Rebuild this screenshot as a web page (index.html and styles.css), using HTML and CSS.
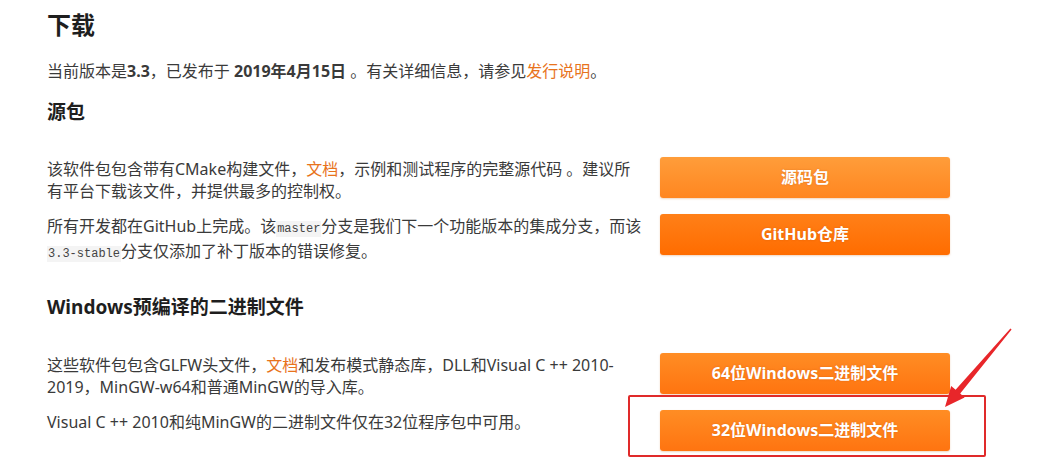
FILE: index.html
```html
<!DOCTYPE html>
<html lang="zh-CN">
<head>
  <meta charset="UTF-8" />
  <meta name="viewport" content="width=device-width, initial-scale=1.0"/>
  <title>下载 - GLFW</title>
  <link rel="stylesheet" href="styles.css">
</head>
<body>
  <div class="page">
    <h1>下载</h1>
    <p class="intro">当前版本是<b>3.3</b>，已发布于 <b>2019年4月15日</b> 。有关详细信息，请参见<a href="#">发行说明</a>。</p>

    <h2>源包</h2>
    <div class="row">
      <p>该软件包包含带有CMake构建文件，<a href="#">文档</a>，示例和测试程序的完整源代码 。建议所有平台下载该文件，并提供最多的控制权。</p>
      <a class="btn light" href="#">源码包</a>
    </div>
    <div class="row">
      <p>所有开发都在GitHub上完成。该<code>master</code>分支是我们下一个功能版本的集成分支，而该<code>3.3-stable</code>分支仅添加了补丁版本的错误修复。</p>
      <a class="btn dark" href="#">GitHub仓库</a>
    </div>

    <h2 class="win">Windows预编译的二进制文件</h2>
    <div class="row">
      <p>这些软件包包含GLFW头文件，<a href="#">文档</a>和发布模式静态库，DLL和Visual C ++ 2010-<wbr>2019，MinGW-w64和普通MinGW的导入库。</p>
      <a class="btn" href="#">64位Windows二进制文件</a>
    </div>
    <div class="row">
      <p>Visual C ++ 2010和纯MinGW的二进制文件仅在32位程序包中可用。</p>
      <a class="btn" href="#">32位Windows二进制文件</a>
    </div>

    <!-- screenshot markup -->
    <div class="mark-box"></div>
    <svg class="mark-arrow" width="80" height="90" viewBox="0 0 80 90">
      <polygon fill="#e8262a" points="70.4,3.5 15.6,64.8 11.2,61 5,82 24.6,72.4 20.2,68.6 71.6,4.5"/>
    </svg>
  </div>
</body>
</html>
```

FILE: styles.css
```css
body {
  margin: 0;
  background: #fff;
  color: #3a3a3a;
  font-family: "Noto Sans", "Noto Sans CJK SC", sans-serif;
  font-size: 16px;
}
.page {
  position: relative;
  padding: 9px 47px 0;
}
h1 {
  margin: 0;
  font-size: 24px;
  line-height: 32px;
  color: #1e1e1e;
}
h2 {
  margin: 16px 0 31px;
  font-size: 19px;
  line-height: 28px;
  color: #1e1e1e;
}
h2.win {
  margin-top: 28px;
  margin-bottom: 32px;
}
p {
  margin: 0;
  line-height: 22px;
}
.intro {
  margin-top: 19px;
}
a {
  color: #e8731c;
  text-decoration: none;
}
code {
  font-family: "Liberation Mono", monospace;
  font-size: 12px;
  background: #f4f4f4;
  padding: 1px 1px;
  color: #444;
}
.row {
  display: grid;
  grid-template-columns: 598px 290px;
  column-gap: 15px;
  align-items: start;
  margin-bottom: 12px;
  min-height: 44px;
}
.row p {
  padding-top: 1px;
}
.btn {
  display: block;
  height: 41px;
  line-height: 41px;
  text-align: center;
  color: #fff;
  font-weight: bold;
  font-size: 16px;
  border-radius: 3px;
  background: linear-gradient(#ff8d24, #ff7410);
  box-shadow: 0 1px 2px rgba(200, 90, 0, 0.25);
  text-shadow: 0 0 2px rgba(160, 60, 0, 0.35);
}
.btn.light {
  background: linear-gradient(#ff9d3a, #ff8620);
}
.btn.dark {
  background: linear-gradient(#ff8018, #ff6c00);
}
.mark-box {
  position: absolute;
  left: 628px;
  top: 395px;
  width: 354px;
  height: 58px;
  border: 2px solid #e02a2a;
  border-radius: 2px;
}
.mark-arrow {
  position: absolute;
  left: 940px;
  top: 325px;
}
```
